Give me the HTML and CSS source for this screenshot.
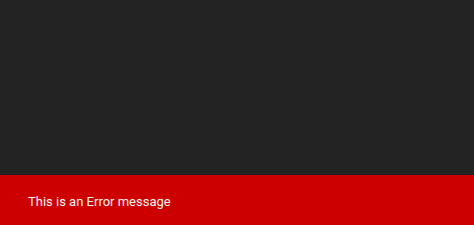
FILE: index.html
```html
<!DOCTYPE html>
<html>
<head>
<meta name="viewport" content="width=device-width, initial-scale=1">
<link rel="stylesheet" href="styles.css">
</head>
<body>
  <div class="screen">
    <div class="content"></div>
    <!-- error snackbar -->
    <div class="snackbar error">
      <span class="message">This is an Error message</span>
    </div>
  </div>
</body>
</html>
```

FILE: styles.css
```css
* {box-sizing: border-box}

body {
  margin: 0;
  font-family: Roboto, "Noto Sans", sans-serif;
  background-color: #232323;
}

.screen {
  display: flex;
  flex-direction: column;
  height: 225px;
}

.content {
  flex: 1;
  background-color: #232323;
}

/* snackbar at the bottom */
.snackbar {
  height: 50px;
  display: flex;
  align-items: center;
  padding: 2px 28px 0;
}

.snackbar.error {
  background-color: #cc0000;
}

.snackbar .message {
  color: #f4f4f4;
  font-size: 13px;
}
```
